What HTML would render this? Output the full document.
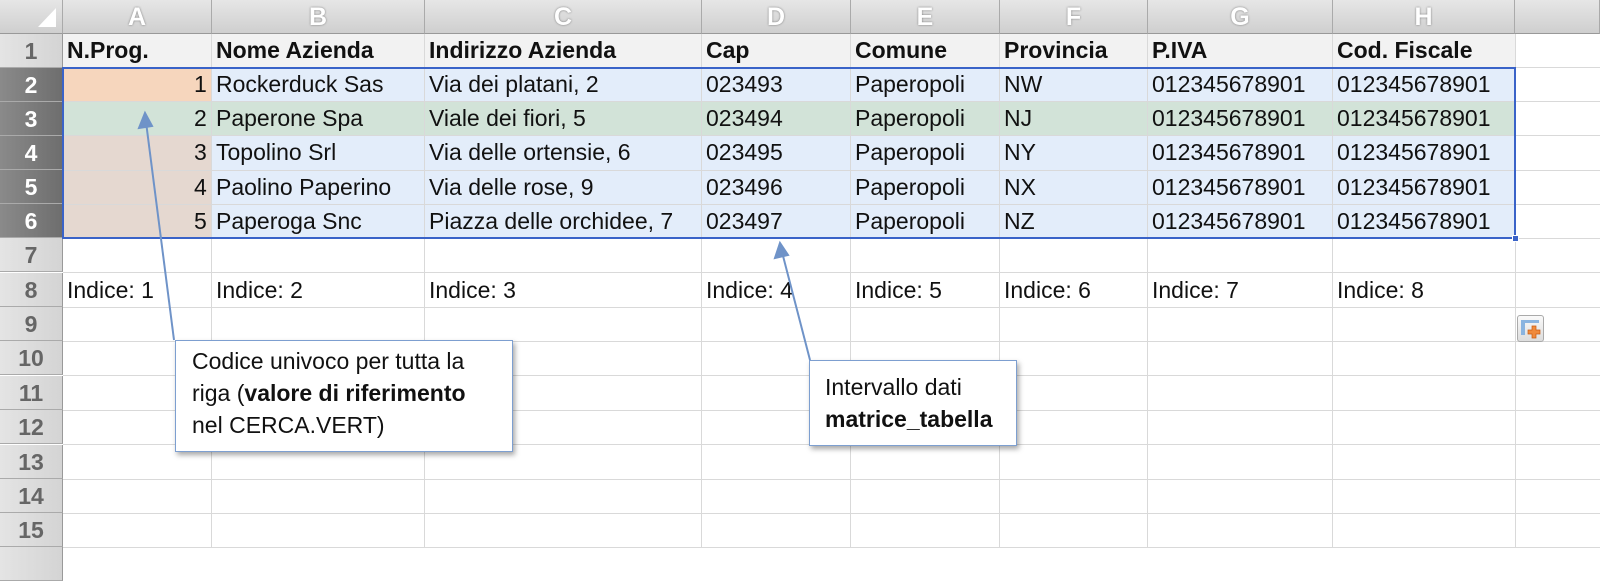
<!DOCTYPE html>
<html><head><meta charset="utf-8"><style>
body{margin:0;width:1600px;height:558px;overflow:hidden;background:#fff;font-family:"Liberation Sans",sans-serif;position:relative}
.a{position:absolute;box-sizing:border-box}
.t{position:absolute;font-size:23px;color:#111;white-space:nowrap;line-height:34px}
.ch{position:absolute;top:0;height:34px;background:linear-gradient(#e6e6e6,#cfcfcf);border-right:1px solid #aaa;border-bottom:1px solid #999;box-sizing:border-box;text-align:center;color:#fff;font-weight:bold;font-size:25px;line-height:34px;text-shadow:0 0 2px #777}
.rh{position:absolute;left:0;width:63px;height:34px;box-sizing:border-box;border-bottom:1px solid #aaa;border-right:1px solid #999;background:linear-gradient(90deg,#e4e4e4,#d4d4d4);color:#666;font-weight:bold;font-size:23px;text-align:center;line-height:34px}
.rh.s{background:linear-gradient(90deg,#8a8a8a,#6e6e6e);color:#fff}
.hl{position:absolute;left:63px;width:1537px;height:1px;background:#d9d9d9}
.vl{position:absolute;top:34px;height:513px;width:1px;background:#d9d9d9}
.box{position:absolute;background:#fff;border:1.5px solid #7d9fd0;box-shadow:2px 3px 5px rgba(0,0,0,.35);font-size:23px;line-height:32px;color:#111;box-sizing:border-box;white-space:nowrap}
</style></head><body>
<div class="a" style="left:63px;top:34px;width:1452px;height:34px;background:#f2f2f2"></div>
<div class="a" style="left:63px;top:68px;width:1452px;height:170px;background:#e3edfa"></div>
<div class="a" style="left:63px;top:102px;width:1452px;height:34px;background:#d2e3d8"></div>
<div class="a" style="left:63px;top:68px;width:149px;height:34px;background:#f6d6bd"></div>
<div class="a" style="left:63px;top:136px;width:149px;height:102px;background:#e5d8d0"></div>
<div class="vl" style="left:211px"></div><div class="vl" style="left:424px"></div><div class="vl" style="left:701px"></div><div class="vl" style="left:850px"></div><div class="vl" style="left:999px"></div><div class="vl" style="left:1147px"></div><div class="vl" style="left:1332px"></div><div class="vl" style="left:1515px"></div>
<div class="hl" style="top:67px"></div><div class="hl" style="top:101px"></div><div class="hl" style="top:135px"></div><div class="hl" style="top:170px"></div><div class="hl" style="top:204px"></div><div class="hl" style="top:238px"></div><div class="hl" style="top:272px"></div><div class="hl" style="top:307px"></div><div class="hl" style="top:341px"></div><div class="hl" style="top:375px"></div><div class="hl" style="top:410px"></div><div class="hl" style="top:444px"></div><div class="hl" style="top:479px"></div><div class="hl" style="top:513px"></div><div class="hl" style="top:547px"></div>
<div class="ch" style="left:0;width:63px"><svg width="63" height="34" style="position:absolute;left:0;top:0"><polygon points="56,8 56,27 38,27" fill="#fff"/></svg></div>
<div class="ch" style="left:63px;width:149px">A</div><div class="ch" style="left:212px;width:213px">B</div><div class="ch" style="left:425px;width:277px">C</div><div class="ch" style="left:702px;width:149px">D</div><div class="ch" style="left:851px;width:149px">E</div><div class="ch" style="left:1000px;width:148px">F</div><div class="ch" style="left:1148px;width:185px">G</div><div class="ch" style="left:1333px;width:182px">H</div><div class="ch" style="left:1515px;width:85px"></div>
<div class="rh" style="top:34px">1</div><div class="rh s" style="top:68px">2</div><div class="rh s" style="top:102px">3</div><div class="rh s" style="top:136px">4</div><div class="rh s" style="top:170px">5</div><div class="rh s" style="top:204px">6</div><div class="rh" style="top:238px">7</div><div class="rh" style="top:273px">8</div><div class="rh" style="top:307px">9</div><div class="rh" style="top:341px">10</div><div class="rh" style="top:376px">11</div><div class="rh" style="top:410px">12</div><div class="rh" style="top:445px">13</div><div class="rh" style="top:479px">14</div><div class="rh" style="top:513px">15</div><div class="rh" style="top:547px"></div>
<div class="t" style="top:33px;left:67px;font-weight:bold">N.Prog.</div><div class="t" style="top:33px;left:216px;font-weight:bold">Nome Azienda</div><div class="t" style="top:33px;left:429px;font-weight:bold">Indirizzo Azienda</div><div class="t" style="top:33px;left:706px;font-weight:bold">Cap</div><div class="t" style="top:33px;left:855px;font-weight:bold">Comune</div><div class="t" style="top:33px;left:1004px;font-weight:bold">Provincia</div><div class="t" style="top:33px;left:1152px;font-weight:bold">P.IVA</div><div class="t" style="top:33px;left:1337px;font-weight:bold">Cod. Fiscale</div>
<div class="t" style="top:67px;left:194px">1</div><div class="t" style="top:67px;left:216px">Rockerduck Sas</div><div class="t" style="top:67px;left:429px">Via dei platani, 2</div><div class="t" style="top:67px;left:706px">023493</div><div class="t" style="top:67px;left:855px">Paperopoli</div><div class="t" style="top:67px;left:1004px">NW</div><div class="t" style="top:67px;left:1152px">012345678901</div><div class="t" style="top:67px;left:1337px">012345678901</div>
<div class="t" style="top:101px;left:194px">2</div><div class="t" style="top:101px;left:216px">Paperone Spa</div><div class="t" style="top:101px;left:429px">Viale dei fiori, 5</div><div class="t" style="top:101px;left:706px">023494</div><div class="t" style="top:101px;left:855px">Paperopoli</div><div class="t" style="top:101px;left:1004px">NJ</div><div class="t" style="top:101px;left:1152px">012345678901</div><div class="t" style="top:101px;left:1337px">012345678901</div>
<div class="t" style="top:135px;left:194px">3</div><div class="t" style="top:135px;left:216px">Topolino Srl</div><div class="t" style="top:135px;left:429px">Via delle ortensie, 6</div><div class="t" style="top:135px;left:706px">023495</div><div class="t" style="top:135px;left:855px">Paperopoli</div><div class="t" style="top:135px;left:1004px">NY</div><div class="t" style="top:135px;left:1152px">012345678901</div><div class="t" style="top:135px;left:1337px">012345678901</div>
<div class="t" style="top:170px;left:194px">4</div><div class="t" style="top:170px;left:216px">Paolino Paperino</div><div class="t" style="top:170px;left:429px">Via delle rose, 9</div><div class="t" style="top:170px;left:706px">023496</div><div class="t" style="top:170px;left:855px">Paperopoli</div><div class="t" style="top:170px;left:1004px">NX</div><div class="t" style="top:170px;left:1152px">012345678901</div><div class="t" style="top:170px;left:1337px">012345678901</div>
<div class="t" style="top:204px;left:194px">5</div><div class="t" style="top:204px;left:216px">Paperoga Snc</div><div class="t" style="top:204px;left:429px">Piazza delle orchidee, 7</div><div class="t" style="top:204px;left:706px">023497</div><div class="t" style="top:204px;left:855px">Paperopoli</div><div class="t" style="top:204px;left:1004px">NZ</div><div class="t" style="top:204px;left:1152px">012345678901</div><div class="t" style="top:204px;left:1337px">012345678901</div>
<div class="t" style="top:273px;left:67px">Indice: 1</div><div class="t" style="top:273px;left:216px">Indice: 2</div><div class="t" style="top:273px;left:429px">Indice: 3</div><div class="t" style="top:273px;left:706px">Indice: 4</div><div class="t" style="top:273px;left:855px">Indice: 5</div><div class="t" style="top:273px;left:1004px">Indice: 6</div><div class="t" style="top:273px;left:1152px">Indice: 7</div><div class="t" style="top:273px;left:1337px">Indice: 8</div>
<div class="a" style="left:62px;top:67px;width:1454px;height:172px;border:2px solid #3a63c8"></div>
<div class="a" style="left:1512px;top:235px;width:7px;height:7px;background:#3a63c8;border:1px solid #fff"></div>
<div class="a" style="left:1517px;top:315px;width:27px;height:27px;border:1px solid #aaa;border-radius:3px;background:linear-gradient(#fafafa,#ddd)">
<svg width="25" height="25"><rect x="3" y="4" width="18" height="3" fill="#8ab4e0"/><rect x="3" y="4" width="4" height="15" fill="#8ab4e0"/><path d="M14 10h4v4h4v4h-4v4h-4v-4h-4v-4h4z" fill="#f08a3c" stroke="#c85a10" stroke-width=".7"/></svg></div>
<svg class="a" style="left:0;top:0" width="1600" height="558"><g stroke="#6f93c8" stroke-width="2" fill="#6f93c8"><line x1="174" y1="340" x2="146" y2="122"/><polygon points="145,113 139,128 152,126"/><line x1="810" y1="360" x2="782" y2="252"/><polygon points="780,243 775,258 788,255"/></g></svg>
<div class="box" style="left:175px;top:340px;width:338px;height:112px;padding:4px 0 0 16px">Codice univoco per tutta la<br>riga (<b>valore di riferimento</b><br>nel CERCA.VERT)</div>
<div class="box" style="left:809px;top:360px;width:208px;height:86px;padding:10px 0 0 15px">Intervallo dati<br><b>matrice_tabella</b></div>
</body></html>
